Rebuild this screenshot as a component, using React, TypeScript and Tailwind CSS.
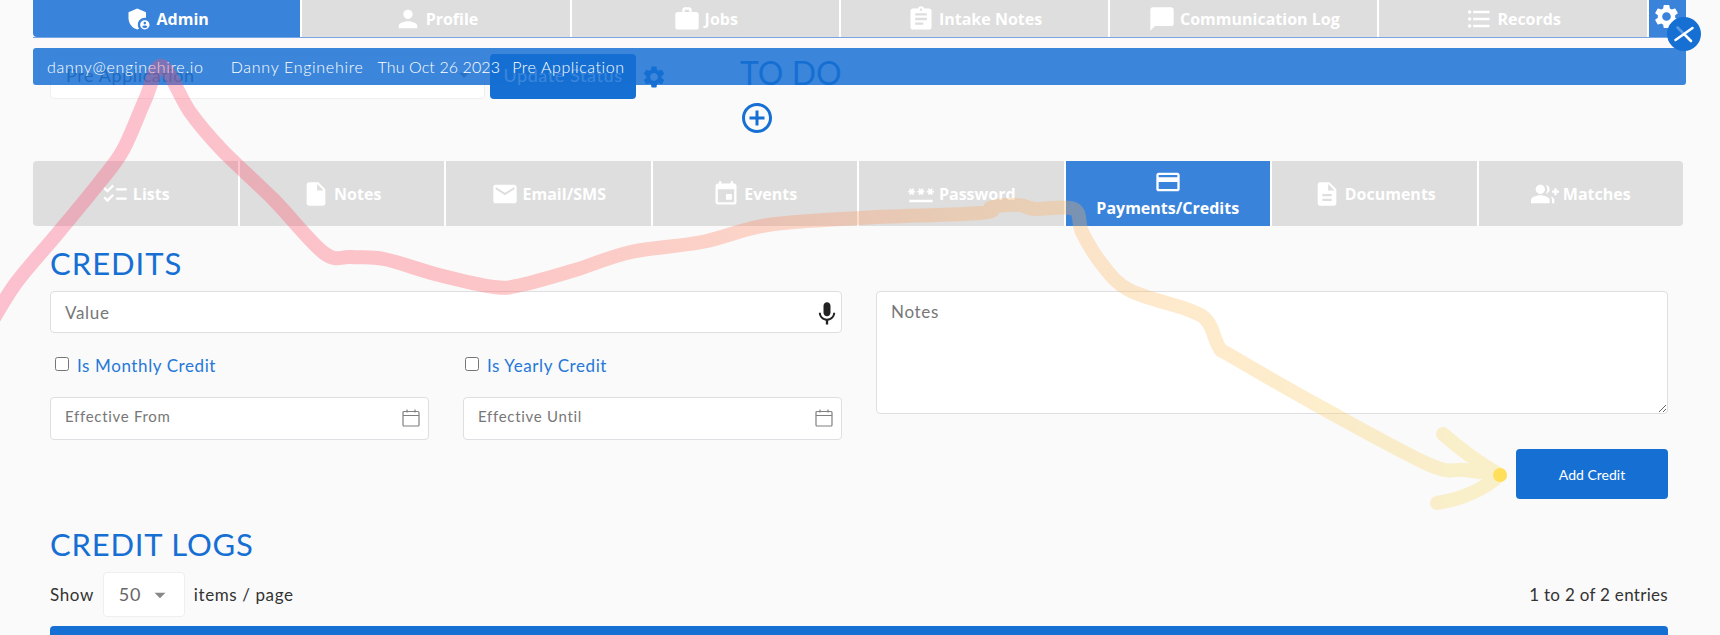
import React from "react";
import {
  MdAdminPanelSettings, MdPerson, MdWork, MdAssignment, MdChatBubble, MdFormatListBulleted, MdSettings,
  MdChecklist, MdInsertDriveFile, MdEmail, MdEvent, MdPassword, MdCreditCard, MdDescription, MdGroupAdd,
  MdMic, MdArrowDropDown, MdAddCircleOutline,
} from "react-icons/md";

const TOP = [
  { label: "Admin", Icon: MdAdminPanelSettings, active: true },
  { label: "Profile", Icon: MdPerson },
  { label: "Jobs", Icon: MdWork },
  { label: "Intake Notes", Icon: MdAssignment },
  { label: "Communication Log", Icon: MdChatBubble },
  { label: "Records", Icon: MdFormatListBulleted },
];
const SUB = [
  { label: "Lists", Icon: MdChecklist },
  { label: "Notes", Icon: MdInsertDriveFile },
  { label: "Email/SMS", Icon: MdEmail },
  { label: "Events", Icon: MdEvent },
  { label: "Password", Icon: MdPassword },
  { label: "Payments/Credits", Icon: MdCreditCard, active: true },
  { label: "Documents", Icon: MdDescription },
  { label: "Matches", Icon: MdGroupAdd },
];

const F = "font-['Lato','Noto_Sans',sans-serif]";
const P = `${F} font-normal tracking-[0.7px]`;

const LINE: [number, number][] = [
  [-10, 325], [16, 283], [58, 233], [99, 183], [123, 150], [145, 100], [162, 66], [190, 112], [222, 150], [274, 200],
  [324, 253], [351, 257], [384, 259], [439, 275], [494, 287], [521, 285], [575, 270], [631, 252], [702, 242], [768, 225],
  [860, 218], [981, 213], [992, 207], [1019, 205], [1035, 209], [1074, 209], [1082, 232], [1101, 263], [1129, 290],
  [1189, 310], [1208, 322], [1219, 347], [1233, 357], [1326, 410], [1430, 465], [1465, 470], [1500, 475],
];

function smooth(p: [number, number][]) {
  let d = `M${p[0][0]} ${p[0][1]}`;
  for (let i = 0; i < p.length - 1; i++) {
    const a = p[Math.max(i - 1, 0)], b = p[i], c = p[i + 1], e = p[Math.min(i + 2, p.length - 1)];
    const c1x = b[0] + (c[0] - a[0]) / 6, c1y = b[1] + (c[1] - a[1]) / 6;
    const c2x = c[0] - (e[0] - b[0]) / 6, c2y = c[1] - (e[1] - b[1]) / 6;
    d += ` C${c1x} ${c1y} ${c2x} ${c2y} ${c[0]} ${c[1]}`;
  }
  return d;
}

function Sketch() {
  return (
    <svg className="absolute left-0 top-0 pointer-events-none" width={1720} height={635} viewBox="0 0 1720 635">
      <defs>
        <linearGradient id="ink" gradientUnits="userSpaceOnUse" x1="0" y1="0" x2="1500" y2="0">
          <stop offset="0" stopColor="#ff4a78" />
          <stop offset="0.3" stopColor="#ff5560" />
          <stop offset="0.65" stopColor="#fdaa60" />
          <stop offset="1" stopColor="#f8de6a" />
        </linearGradient>
      </defs>
      <g opacity={0.33} fill="none" stroke="url(#ink)" strokeWidth={14} strokeLinecap="round" strokeLinejoin="round">
        <path d={smooth(LINE)} />
        <path d="M1443 434 Q1470 458 1500 475 Q1475 497 1437 503" />
      </g>
      <circle cx={1500} cy={475} r={7} fill="#ffdf5c" />
    </svg>
  );
}

function Calendar() {
  return (
    <svg className="absolute right-[9px] top-[12px]" width="18" height="18" viewBox="0 0 18 18" fill="none" stroke="#808080" strokeWidth="1.2">
      <rect x="1" y="2.5" width="16" height="14.5" rx="1" />
      <path d="M1 6.5 H17 M5 0.5 V3.5 M13 0.5 V3.5" />
    </svg>
  );
}

function DateInput({ label }: { label: string }) {
  return (
    <div className="relative w-[379px] h-[43px]">
      <input placeholder={label} className={`${P} w-full h-full bg-white border border-[#dfdfe3] rounded-[4px] pl-[14px] pb-[5px] text-[15px] outline-none placeholder:text-[#777]`} />
      <Calendar />
    </div>
  );
}

export default function App() {
  return (
    <div className={`${F} font-normal tracking-[0.6px] relative w-[1720px] h-[635px] overflow-hidden bg-[#fafafa]`}>
      {/* top nav */}
      <div className="ml-[33px] w-[1653px] h-[38px] flex border-b border-[#76a6e3] font-['Open_Sans',sans-serif] font-bold tracking-normal text-[16px] text-white">
        {TOP.map(({ label, Icon, active }) => (
          <div key={label} className={`w-[269.3px] flex items-center justify-center gap-[4px] border-r-2 border-white ${active ? "bg-[#3a83da] rounded-bl-[4px]" : "bg-[#dedede]"}`}>
            <Icon size={28} />
            <span>{label}</span>
          </div>
        ))}
        <div className="flex-1 bg-[#3a83da] pl-[3px] pt-[2px]"><MdSettings size={29} /></div>
      </div>

      {/* status row, covered by the info bar */}
      <div className="relative flex ml-[50px] mt-[16px] h-[107px]">
        <div className="relative w-[435px] h-[45px] bg-white border border-[#efefef] rounded-[4px] pl-[15px] pt-[7px] text-[18px] text-[#555]">
          Pre Application
          <MdArrowDropDown className="absolute right-[8px] top-[8px] text-[#888]" size={24} />
        </div>
        <div className="ml-[5px] w-[146px] h-[45px] bg-[#166fd3] rounded-[4px] flex items-center justify-center text-white text-[18px] pb-[2px]">Update Status</div>
        <MdSettings className="ml-[5px] mt-[10px] text-[#166fd3]" size={26} />
        <div className="ml-[73px] flex flex-col">
          <div className="text-[#166fd3] text-[32px] leading-[38px] tracking-normal">TO DO</div>
          <MdAddCircleOutline className="-ml-[1px] mt-[8px] text-[#166fd3]" size={36} />
        </div>
      </div>

      {/* sub nav */}
      <div className="ml-[33px] w-[1650px] h-[65px] flex rounded-[4px] overflow-hidden font-['Open_Sans',sans-serif] font-bold tracking-normal text-[16px] text-white">
        {SUB.map(({ label, Icon, active }, i) => (
          <div key={label} className={`flex-1 flex ${i < 7 ? "border-r-2 border-white" : ""} ${active ? "flex-col items-center justify-center bg-[#3a83da]" : "items-center justify-center gap-[4px] bg-[#dedede]"}`}>
            <Icon size={28} />
            <span>{label}</span>
          </div>
        ))}
      </div>

      {/* form */}
      <div className="pl-[50px] pr-[52px] w-[1720px]">
        <h2 className="mt-[18px] text-[31px] leading-[38px] tracking-[1px] text-[#166fd3]">CREDITS</h2>
        <div className="mt-[9px] flex gap-[34px]">
          <div className="w-[792px]">
            <div className="relative h-[42px]">
              <input placeholder="Value" className={`${P} w-full h-full bg-white border border-[#dfdfe3] rounded-[4px] pl-[14px] text-[17px] outline-none placeholder:text-[#777]`} />
              <MdMic className="absolute right-[1px] top-[9px] text-[#222]" size={28} />
            </div>
            <div className="mt-[24px] flex h-[18px] text-[17px] text-[#2578d8]">
              <label className="w-[410px] flex items-center gap-[8px] pl-[5px]">
                <input type="checkbox" className="w-[14px] h-[14px] -mt-[4px]" />
                <span>Is Monthly Credit</span>
              </label>
              <label className="flex items-center gap-[8px] pl-[5px]">
                <input type="checkbox" className="w-[14px] h-[14px] -mt-[4px]" />
                <span>Is Yearly Credit</span>
              </label>
            </div>
            <div className="mt-[22px] flex justify-between">
              <DateInput label="Effective From" />
              <DateInput label="Effective Until" />
            </div>
          </div>
          <div className="w-[792px]">
            <textarea placeholder="Notes" className={`${P} block w-full h-[123px] bg-white border border-[#dfdfe3] rounded-[4px] px-[14px] py-[7px] text-[17px] outline-none placeholder:text-[#777]`} />
            <div className="mt-[35px] flex justify-end">
              <button className="w-[152px] h-[50px] bg-[#166fd3] rounded-[4px] text-white text-[14px] tracking-normal">Add Credit</button>
            </div>
          </div>
        </div>
        <h2 className="mt-[26px] text-[31px] leading-[38px] tracking-[0.8px] text-[#166fd3]">CREDIT LOGS</h2>
        <div className="mt-[9px] flex items-center justify-between text-[17px] text-[#333]">
          <div className="flex items-center">
            <span>Show</span>
            <div className="ml-[9px] w-[82px] h-[45px] bg-white border border-[#efefef] rounded-[4px] flex items-center pl-[15px] text-[#666] text-[18px]">
              50
              <MdArrowDropDown className="ml-[6px] text-[#888]" size={26} />
            </div>
            <span className="ml-[9px]">items / page</span>
          </div>
          <span className="tracking-[0.3px]">1 to 2 of 2 entries</span>
        </div>
        <div className="mt-[9px] h-[30px] bg-[#166fd3] rounded-t-[4px]" />
      </div>

      {/* info bar over the status row */}
      <div className="absolute left-[33px] top-[38px] w-[1653px]">
        <div className="h-[10px] w-[1639px] bg-[#fdf9fb]" />
        <div className="h-[37px] bg-[#166fd3]/84 rounded-[3px] flex items-center pl-[14px] text-white text-[16px] font-light">
          <span className="tracking-[0.7px]">danny@enginehire.io</span>
          <span className="ml-[27px] tracking-[0.7px]">Danny Enginehire</span>
          <span className="ml-[14px] tracking-[0.1px]">Thu Oct 26 2023</span>
          <span className="ml-[12px] tracking-[0.6px]">Pre Application</span>
        </div>
      </div>

      {/* floating round button */}
      <div className="absolute left-[1667px] top-[17px] w-[34px] h-[34px] rounded-full bg-[#166fd3]">
        <svg width="34" height="34" viewBox="0 0 34 34" fill="none" strokeLinecap="round" strokeWidth={2.6}>
          <path d="M10.5 10.5 L16 16" stroke="#5b9be3" />
          <path d="M8.5 23 L25.5 11 M17 17 L24 24" stroke="#fff" />
        </svg>
      </div>

      <Sketch />
    </div>
  );
}
